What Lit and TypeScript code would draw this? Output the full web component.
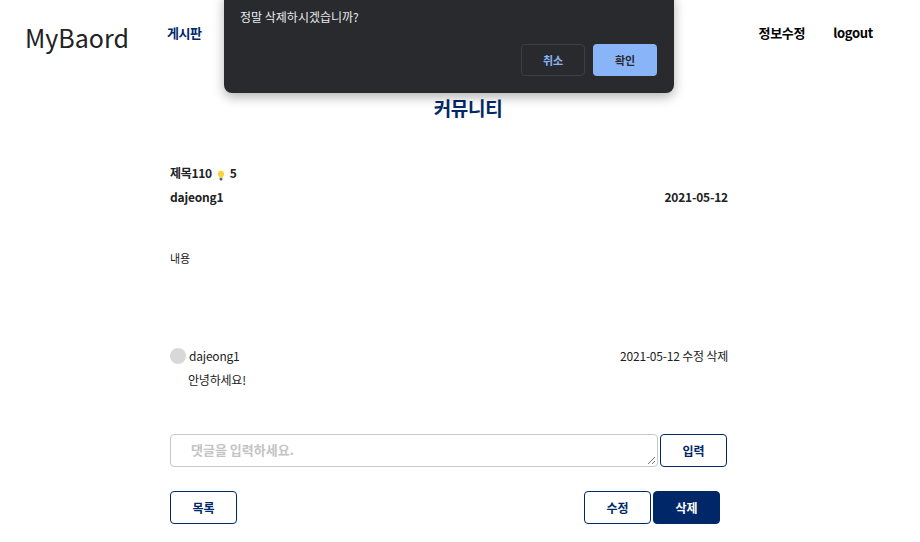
import { LitElement, html, css } from "lit";
import { customElement } from "lit/decorators.js";

@customElement("app-root")
export class AppRoot extends LitElement {
  static styles = css`
    :host {
      display: block;
      position: relative;
      width: 920px;
      height: 542px;
      overflow: hidden;
      background: #fff;
      color: #111;
      font-family: "Noto Sans CJK KR", "Noto Sans", sans-serif;
      font-size: 12px;
      line-height: 18px;
    }
    .header {
      display: flex;
      align-items: flex-start;
      height: 74px;
    }
    .logo {
      margin: 19px 0 0 25px;
      width: 142px;
      font-size: 25px;
      line-height: 36px;
      color: #222;
    }
    .nav {
      margin-top: 24px;
      font-size: 13px;
      font-weight: 700;
      letter-spacing: -0.4px;
    }
    .nav.board { color: #002868; }
    .right {
      margin: 24px 47px 0 auto;
      display: flex;
      gap: 28px;
      font-size: 13px;
      font-weight: 700;
      letter-spacing: -0.3px;
      color: #000;
    }
    h1 {
      margin: 22px 0 0;
      font-size: 19px;
      line-height: 24px;
      font-weight: 700;
      text-align: center;
      color: #002868;
      padding-left: 16px;
      letter-spacing: -0.3px;
    }
    .content {
      width: 558px;
      margin: 44px 0 0 170px;
    }
    .title {
      display: flex;
      align-items: center;
      font-weight: 700;
      letter-spacing: -0.3px;
      color: #222;
    }
    .title svg { margin: 3px 3px 0 3px; }
    .meta {
      display: flex;
      justify-content: space-between;
      margin-top: 6px;
      font-weight: 700;
      letter-spacing: -0.2px;
      color: #222;
    }
    .body {
      margin-top: 43px;
      font-size: 11px;
      color: #222;
    }
    .comment-head {
      display: flex;
      align-items: center;
      margin-top: 80px;
      color: #222;
      letter-spacing: -0.2px;
    }
    .avatar {
      width: 16px;
      height: 16px;
      border-radius: 50%;
      background: #d8d8d8;
      margin-right: 3px;
    }
    .comment-meta { margin-left: auto; }
    .comment-text {
      margin: 6px 0 0 18px;
      color: #222;
      letter-spacing: -0.2px;
    }
    .form {
      display: flex;
      gap: 2px;
      margin-top: 45px;
    }
    .input {
      position: relative;
      box-sizing: border-box;
      width: 488px;
      height: 33px;
      border: 1px solid #c8c8c8;
      border-radius: 4px;
      padding: 6px 20px;
      font-weight: 700;
      font-size: 13px;
      color: #c4c4c4;
    }
    .grip {
      position: absolute;
      right: 1px;
      bottom: 1px;
    }
    .btn {
      box-sizing: border-box;
      width: 67px;
      height: 33px;
      display: flex;
      align-items: center;
      justify-content: center;
      border: 1px solid #002868;
      border-radius: 4px;
      background: #fff;
      color: #002868;
      font-weight: 700;
    }
    .btn.solid { background: #002868; color: #fff; }
    .actions {
      display: flex;
      gap: 2px;
      margin-top: 24px;
      padding-right: 8px;
    }
    .spacer { flex: 1; }
    .dialog {
      position: absolute;
      left: 224px;
      top: -8px;
      box-sizing: border-box;
      width: 450px;
      height: 101px;
      background: #292a2d;
      border-radius: 8px;
      box-shadow: 0 4px 12px rgba(0, 0, 0, 0.3);
      padding: 16px;
      color: #e8eaed;
      font-size: 12px;
    }
    .dialog p { margin: 0; }
    .dialog-actions {
      position: absolute;
      right: 17px;
      bottom: 17px;
      display: flex;
      gap: 8px;
    }
    .dbtn {
      box-sizing: border-box;
      width: 64px;
      height: 32px;
      display: flex;
      align-items: center;
      justify-content: center;
      border-radius: 4px;
      font-size: 11px;
      font-weight: 700;
    }
    .dbtn.cancel { border: 1px solid #3c4043; color: #8ab4f8; }
    .dbtn.ok { background: #8ab4f8; color: #292a2d; }
  `;

  render() {
    return html`
      <div class="header">
        <div class="logo">MyBaord</div>
        <div class="nav board">게시판</div>
        <div class="right"><span>정보수정</span><span>logout</span></div>
      </div>
      <h1>커뮤니티</h1>
      <div class="content">
        <div class="title">
          <span>제목110</span>
          <svg width="12" height="12" viewBox="0 0 12 12">
            <g stroke="#ffe9a0" stroke-width="0.7">
              <path d="M6 0v1.2M1.5 5H.4M11.6 5h-1.1M2.8 1.8l.8.8M9.2 1.8l-.8.8" />
            </g>
            <path d="M6 1.8a3.2 3.2 0 0 0-1.7 5.9V9h3.4V7.7A3.2 3.2 0 0 0 6 1.8z" fill="#fdd13c" />
            <rect x="4.5" y="9" width="3" height="2.4" rx="0.8" fill="#4c6a85" />
          </svg>
          <span>5</span>
        </div>
        <div class="meta"><span>dajeong1</span><span>2021-05-12</span></div>
        <div class="body">내용</div>
        <div class="comment-head">
          <span class="avatar"></span>
          <span>dajeong1</span>
          <span class="comment-meta">2021-05-12 수정 삭제</span>
        </div>
        <div class="comment-text">안녕하세요!</div>
        <div class="form">
          <div class="input">
            댓글을 입력하세요.
            <svg class="grip" width="9" height="9" viewBox="0 0 9 9">
              <path d="M1 8l7-7M5 8l3-3" stroke="#777" stroke-width="1" fill="none" />
            </svg>
          </div>
          <div class="btn">입력</div>
        </div>
        <div class="actions">
          <div class="btn">목록</div>
          <div class="spacer"></div>
          <div class="btn">수정</div>
          <div class="btn solid">삭제</div>
        </div>
      </div>
      <div class="dialog">
        <p>정말 삭제하시겠습니까?</p>
        <div class="dialog-actions">
          <div class="dbtn cancel">취소</div>
          <div class="dbtn ok">확인</div>
        </div>
      </div>
    `;
  }
}
